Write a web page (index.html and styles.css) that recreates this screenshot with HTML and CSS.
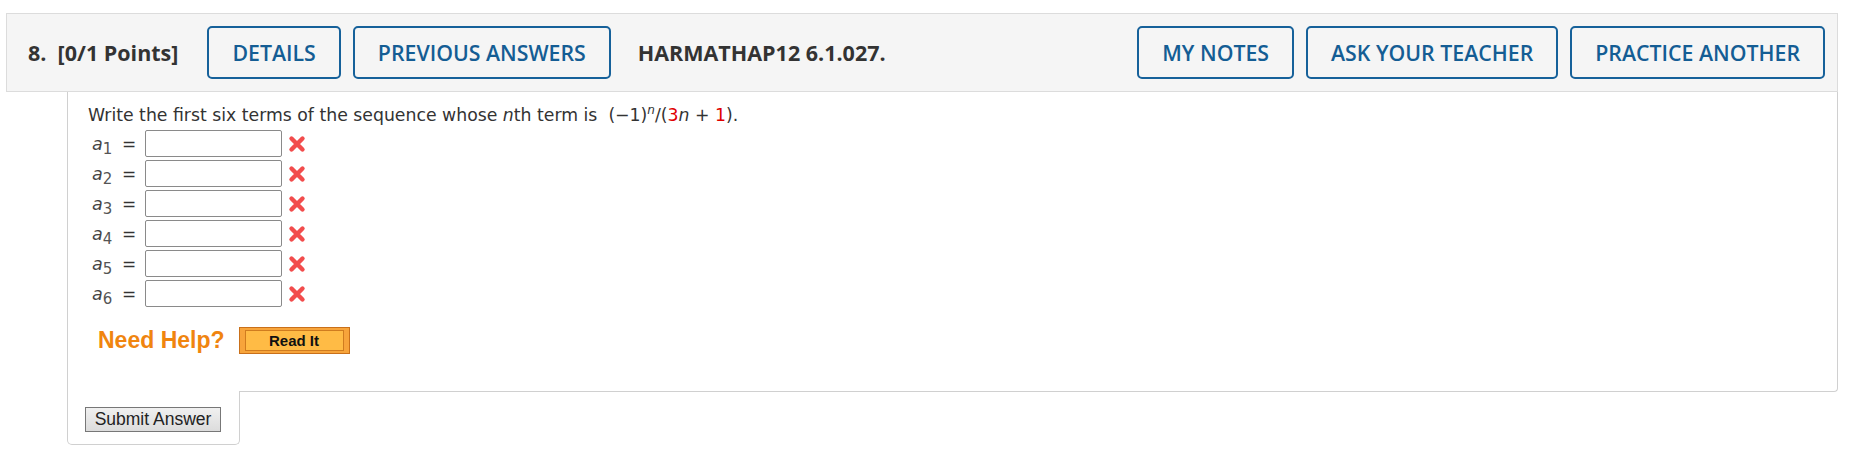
FILE: index.html
```html
<!DOCTYPE html>
<html>
<head>
<meta charset="utf-8">
<link rel="stylesheet" href="styles.css">
</head>
<body>
<div class="page">
  <div class="qbar">
    <div class="qnum">8.&nbsp; [0/1 Points]</div>
    <button class="qbtn">DETAILS</button>
    <button class="qbtn">PREVIOUS ANSWERS</button>
    <div class="qcode">HARMATHAP12 6.1.027.</div>
    <div class="spacer"></div>
    <button class="qbtn">MY NOTES</button>
    <button class="qbtn">ASK YOUR TEACHER</button>
    <button class="qbtn">PRACTICE ANOTHER</button>
  </div>
  <div class="qbody">
    <p class="prompt">Write the first six terms of the sequence whose <i>n</i>th term is&nbsp; <span class="math">(−1)<sup><i>n</i></sup>/(<span class="red">3</span><i>n</i> + <span class="red">1</span>)</span>.</p>
    <div class="rows">
      <div class="row"><span class="lbl"><i>a</i><sub>1</sub></span><span class="eq">=</span><input class="ans" type="text"><svg class="x" viewBox="0 0 18 18"><path d="M3.5 3.5 L14.5 14.5 M14.5 3.5 L3.5 14.5"/></svg></div>
      <div class="row"><span class="lbl"><i>a</i><sub>2</sub></span><span class="eq">=</span><input class="ans" type="text"><svg class="x" viewBox="0 0 18 18"><path d="M3.5 3.5 L14.5 14.5 M14.5 3.5 L3.5 14.5"/></svg></div>
      <div class="row"><span class="lbl"><i>a</i><sub>3</sub></span><span class="eq">=</span><input class="ans" type="text"><svg class="x" viewBox="0 0 18 18"><path d="M3.5 3.5 L14.5 14.5 M14.5 3.5 L3.5 14.5"/></svg></div>
      <div class="row"><span class="lbl"><i>a</i><sub>4</sub></span><span class="eq">=</span><input class="ans" type="text"><svg class="x" viewBox="0 0 18 18"><path d="M3.5 3.5 L14.5 14.5 M14.5 3.5 L3.5 14.5"/></svg></div>
      <div class="row"><span class="lbl"><i>a</i><sub>5</sub></span><span class="eq">=</span><input class="ans" type="text"><svg class="x" viewBox="0 0 18 18"><path d="M3.5 3.5 L14.5 14.5 M14.5 3.5 L3.5 14.5"/></svg></div>
      <div class="row"><span class="lbl"><i>a</i><sub>6</sub></span><span class="eq">=</span><input class="ans" type="text"><svg class="x" viewBox="0 0 18 18"><path d="M3.5 3.5 L14.5 14.5 M14.5 3.5 L3.5 14.5"/></svg></div>
    </div>
    <div class="help">
      <span class="needhelp">Need Help?</span>
      <span class="readit"><span class="readit-in">Read It</span></span>
    </div>
  </div>
  <div class="tab">
    <button class="submit">Submit Answer</button>
  </div>
</div>
</body>
</html>
```
FILE: styles.css
```css
html, body {
  margin: 0;
  padding: 0;
  background: #fff;
}
.page {
  padding: 13px 12px 0 6px;
}
.qbar {
  display: flex;
  align-items: center;
  gap: 12px;
  height: 77px;
  padding: 0 12px 0 21px;
  background: #f5f5f5;
  border: 1px solid #dcdcdc;
  font-family: "Open Sans", sans-serif;
}
.qnum {
  font-weight: 700;
  font-size: 21.5px;
  color: #333;
  margin-right: 17px;
}
.qcode {
  font-weight: 700;
  font-size: 21.5px;
  color: #333;
  margin-left: 15px;
}
.spacer { flex: 1; }
.qbtn {
  height: 53px;
  padding: 0 23px;
  background: #f5f5f5;
  border: 2px solid #16619a;
  border-radius: 5px;
  color: #145d94;
  font-family: "Open Sans", sans-serif;
  font-size: 21.3px;
  font-weight: 600;
}
.qbody {
  margin-left: 61px;
  border-left: 1px solid #d0d0d0;
  border-right: 1px solid #d0d0d0;
  border-bottom: 1px solid #d0d0d0;
  border-bottom-right-radius: 4px;
  padding: 12px 20px 0 20px;
  height: 300px;
  box-sizing: border-box;
  font-family: "DejaVu Sans", Verdana, sans-serif;
  color: #333;
}
.prompt {
  margin: 0 0 4px 0;
  font-size: 17.3px;
  line-height: 22px;
}
.math sup {
  font-size: 12px;
  vertical-align: 7px;
  line-height: 0;
}
.red { color: #e00000; }
.rows {
  display: flex;
  flex-direction: column;
  gap: 3px;
  padding-left: 4px;
}
.row {
  display: flex;
  align-items: center;
  height: 27px;
}
.lbl {
  width: 30px;
  font-size: 17.5px;
  color: #444;
}
.lbl sub {
  font-size: 15px;
  color: #555;
  vertical-align: -4px;
  line-height: 0;
}
.eq {
  width: 23px;
  font-size: 17px;
  color: #333;
}
.ans {
  width: 137px;
  height: 27px;
  box-sizing: border-box;
  margin: 0 6px 0 0;
  border: 1px solid #8a8a8a;
  border-radius: 2px;
  background: #fff;
  padding: 0;
}
.x {
  width: 18px;
  height: 18px;
}
.x path {
  stroke: #f24c4c;
  stroke-width: 4.4;
  stroke-linecap: round;
  fill: none;
}
.help {
  display: flex;
  align-items: center;
  gap: 14px;
  margin-top: 20px;
  padding-left: 10px;
}
.needhelp {
  font-family: "Liberation Sans", Arial, sans-serif;
  font-weight: 700;
  font-size: 23px;
  color: #f0850f;
}
.readit {
  display: flex;
  width: 111px;
  height: 27px;
  box-sizing: border-box;
  padding: 2px 5px;
  background: #f7a43b;
  border: 1px solid #c9701a;
}
.readit-in {
  flex: 1;
  display: flex;
  align-items: center;
  justify-content: center;
  background: #ffbb45;
  border: 1px solid #d07c1f;
  font-family: "Liberation Sans", Arial, sans-serif;
  font-weight: 700;
  font-size: 15px;
  color: #111;
}
.tab {
  margin: -1px 0 0 61px;
  width: 173px;
  height: 54px;
  box-sizing: border-box;
  background: #fff;
  border: 1px solid #d0d0d0;
  border-top: none;
  border-radius: 0 0 5px 5px;
  padding: 16px 0 0 17px;
}
.submit {
  width: 136px;
  height: 25px;
  padding: 0;
  background: linear-gradient(#f0f0f0, #dcdcdc);
  border: 1px solid #777;
  font-family: "Liberation Sans", Arial, sans-serif;
  font-size: 17.5px;
  color: #222;
}
```
